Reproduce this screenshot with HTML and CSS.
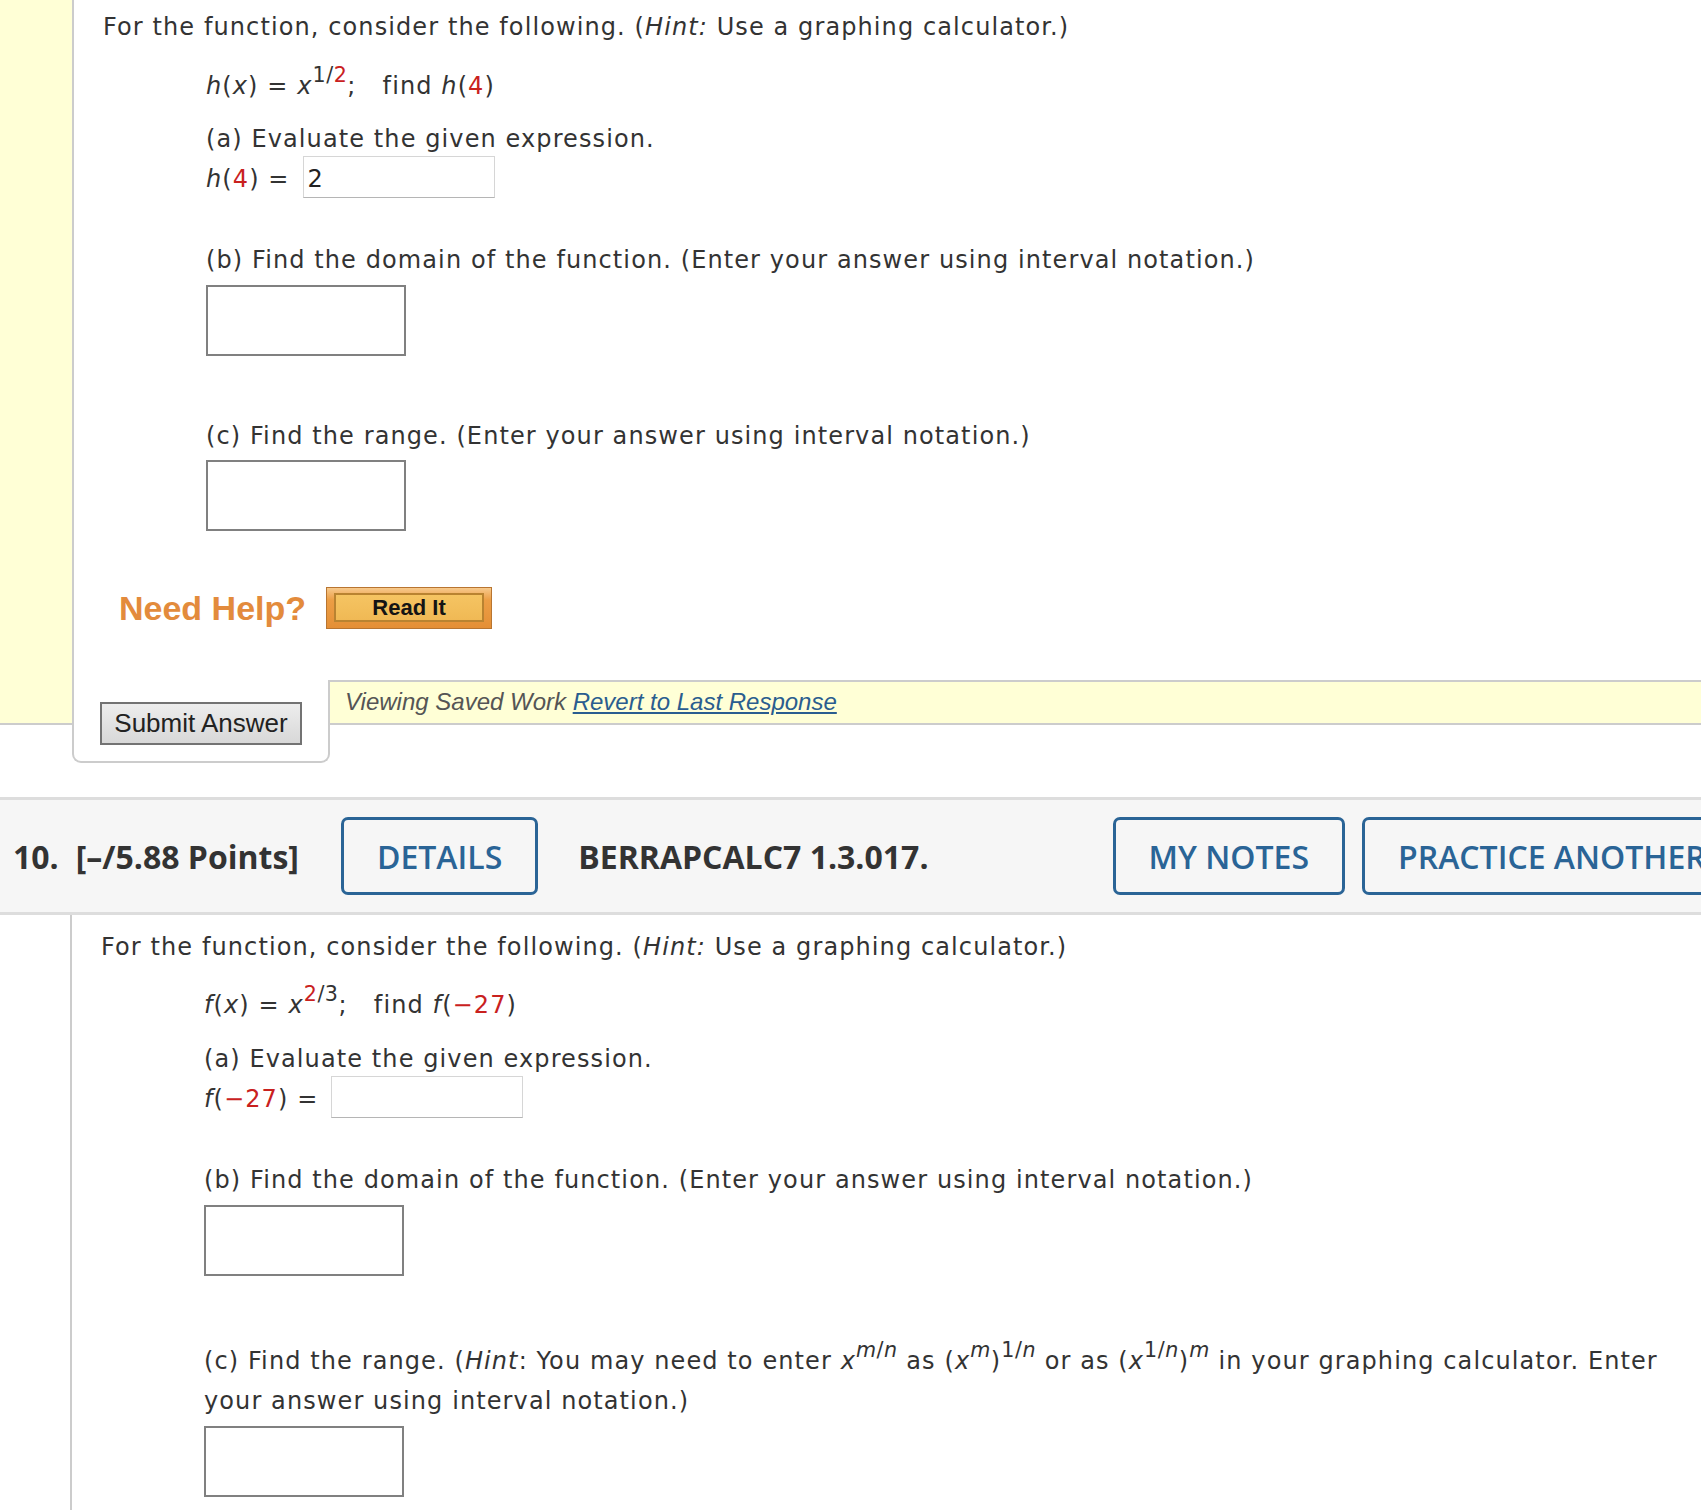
FILE: index.html
```html
<!DOCTYPE html>
<html>
<head>
<meta charset="utf-8">
<title>Question</title>
<link rel="stylesheet" href="styles.css">
</head>
<body>
<div class="q">
  <div class="q-main">
    <p class="line">For the function, consider the following. (<i>Hint:</i> Use a graphing calculator.)</p>
    <div class="parts">
      <p class="line formula"><i>h</i>(<i>x</i>) = <i>x</i><sup>1/<span class="red">2</span></sup>;&nbsp;&nbsp; find <i>h</i>(<span class="red">4</span>)</p>
      <p class="line part-a">(a) Evaluate the given expression.</p>
      <div class="answer"><span class="label"><i>h</i>(<span class="red">4</span>) =</span><span class="field">2</span></div>
      <p class="line part-b">(b) Find the domain of the function. (Enter your answer using interval notation.)</p>
      <div class="box"></div>
      <p class="line part-c">(c) Find the range. (Enter your answer using interval notation.)</p>
      <div class="box"></div>
    </div>
    <div class="help">
      <span class="need">Need Help?</span>
      <span class="readit"><span class="readit-face">Read It</span></span>
    </div>
  </div>
  <div class="q-foot">
    <div class="tab"><button class="submit">Submit Answer</button></div>
    <div class="saved"><i>Viewing Saved Work <a href="#">Revert to Last Response</a></i></div>
  </div>
</div>

<div class="qhead">
  <span class="qnum">10.</span>
  <span class="qnum pts">[–/5.88 Points]</span>
  <span class="btn details">DETAILS</span>
  <span class="qnum code">BERRAPCALC7 1.3.017.</span>
  <span class="btn mynotes">MY NOTES</span>
  <span class="btn practice">PRACTICE ANOTHER</span>
</div>

<div class="q2">
  <p class="line">For the function, consider the following. (<i>Hint:</i> Use a graphing calculator.)</p>
  <div class="parts">
    <p class="line formula2"><i>f</i>(<i>x</i>) = <i>x</i><sup><span class="red">2</span>/3</sup>;&nbsp;&nbsp; find <i>f</i>(<span class="red">−27</span>)</p>
    <p class="line part-a2">(a) Evaluate the given expression.</p>
    <div class="answer"><span class="label"><i>f</i>(<span class="red">−27</span>) =</span><span class="field"></span></div>
    <p class="line part-b">(b) Find the domain of the function. (Enter your answer using interval notation.)</p>
    <div class="box"></div>
    <p class="line part-c2">(c) Find the range. (<i>Hint</i>: You may need to enter <i>x</i><sup><i>m</i>/<i>n</i></sup> as (<i>x</i><sup><i>m</i></sup>)<sup>1/<i>n</i></sup> or as (<i>x</i><sup>1/<i>n</i></sup>)<sup><i>m</i></sup> in your graphing calculator. Enter your answer using interval notation.)</p>
    <div class="box"></div>
  </div>
</div>
</body>
</html>
```

FILE: styles.css
```css
* { box-sizing: border-box; }
html, body { margin: 0; padding: 0; background: #fff; overflow-x: hidden; }
body {
  font-family: "DejaVu Sans", Verdana, sans-serif;
  font-size: 24px;
  letter-spacing: 1.1px;
  color: #333;
  width: 1701px;
}
i { font-style: italic; }
.red { color: #c9211e; }
sup {
  font-size: 0.86em;
  line-height: 1;
  vertical-align: 0.6em;
  letter-spacing: 0.5px;
}

.line { margin: 0 0 -1px; line-height: 40px; padding-top: 1px; }

/* previous question */
.q {
  background: #ffffd6;
  padding-left: 72px;
  border-bottom: 2px solid #cccccc;
}
.q-main {
  background: #fff;
  border-left: 2px solid #cccccc;
  padding: 6px 0 51px 29px;
}
.parts { padding-left: 103px; }
.formula { margin-top: 18px; }
.part-a { margin-top: 13px; }
.answer {
  display: flex;
  align-items: center;
  height: 42px;
  margin-top: -3px;
}
.label { line-height: 40px; margin-right: 13px; padding-top: 4px; }
.field {
  display: block;
  width: 192px;
  height: 42px;
  border: 1px solid #d6d6d6;
  border-bottom-color: #b5b5b5;
  background: #fff;
  padding: 3px 0 0 4px;
  line-height: 38px;
  color: #222;
}
.part-b { margin-top: 41px; }
.box {
  width: 200px;
  height: 71px;
  border: 2px solid #808080;
  margin-top: 6px;
  background: #fff;
}
.part-c { margin-top: 59px; }
.part-c + .box { margin-top: 5px; }

.help {
  display: flex;
  align-items: center;
  gap: 20px;
  height: 42px;
  margin: 56px 0 0 16px;
  letter-spacing: 0;
}
.need {
  font-family: "Liberation Sans", Arial, sans-serif;
  font-weight: bold;
  font-size: 34px;
  color: #e38b3c;
}
.readit {
  display: block;
  width: 166px;
  height: 42px;
  border: 1px solid #b87531;
  background: linear-gradient(#f7c98c 0, #ec9e45 30%, #e48f36 100%);
  padding: 5px 7px 6px;
}
.readit-face {
  display: block;
  height: 100%;
  border: 2px solid #b98331;
  background: linear-gradient(#f5c462, #f0b955);
  text-align: center;
  font-family: "Liberation Sans", Arial, sans-serif;
  font-weight: bold;
  font-size: 22px;
  line-height: 25px;
  color: #141414;
}

.q-foot { display: flex; letter-spacing: 0; }
.tab {
  flex: 0 0 258px;
  height: 83px;
  margin-bottom: -40px;
  background: #fff;
  border: 2px solid #cccccc;
  border-top: 0;
  border-radius: 0 0 9px 9px;
  padding: 22px 0 0 26px;
}
.submit {
  display: block;
  width: 202px;
  height: 43px;
  border: 2px solid #737373;
  background: linear-gradient(#ededed, #d8d8d8);
  font-family: "Liberation Sans", Arial, sans-serif;
  font-size: 26px;
  color: #222;
  padding: 0;
}
.saved {
  flex: 1;
  height: 43px;
  border-top: 2px solid #cccccc;
  padding-left: 15px;
  font-family: "Liberation Sans", Arial, sans-serif;
  font-size: 24px;
  line-height: 40px;
  color: #555;
}
.saved a { color: #2a5d8f; text-decoration: underline; }

/* question header */
.qhead {
  margin-top: 72px;
  height: 118px;
  background: #f6f6f6;
  border-top: 3px solid #dddddd;
  border-bottom: 3px solid #dddddd;
  display: flex;
  align-items: center;
  padding-left: 13px;
  overflow: hidden;
  white-space: nowrap;
  font-family: "Open Sans", sans-serif;
  letter-spacing: 0;
}
.qnum { font-weight: 700; font-size: 32px; color: #333; flex-shrink: 0; }
.pts { margin-left: 17px; }
.btn {
  flex-shrink: 0;
  height: 78px;
  border: 3px solid #2a6496;
  border-radius: 7px;
  color: #2a6496;
  font-weight: 600;
  font-size: 32px;
  display: flex;
  align-items: center;
  padding: 0 33px;
}
.details { margin-left: 42px; }
.code { margin-left: 40px; }
.mynotes { margin-left: 184px; }
.practice { margin-left: 17px; }

/* current question */
.q2 {
  margin-left: 70px;
  border-left: 2px solid #cccccc;
  padding: 11px 0 20px 29px;
}
.formula2 { margin-top: 17px; }
.part-a2 { margin-top: 13px; }
.part-c2 { margin-top: 63px; padding-right: 8px; }
```
